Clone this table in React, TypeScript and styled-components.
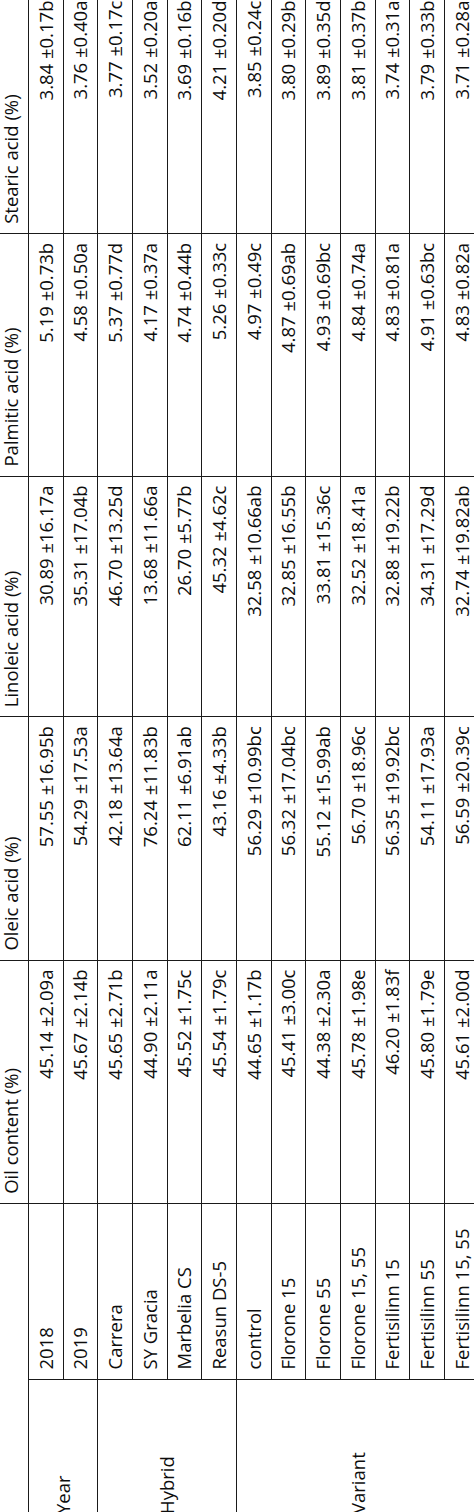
import React from "react";
import styled, { createGlobalStyle } from "styled-components";

const GlobalStyle = createGlobalStyle`
  html, body { margin: 0; padding: 0; background: #ffffff; }
  #root { width: 474px; height: 1512px; }
`;

const Page = styled.div`
  width: 474px;
  height: 1512px;
  overflow: hidden;
  background: #ffffff;
`;

const Sheet = styled.div`
  width: 1533px;
  transform-origin: 0 0;
  transform: translate(-6px, 1524px) rotate(-90deg);
`;

const Table = styled.table`
  width: 1533px;
  table-layout: fixed;
  border-collapse: collapse;
  font-family: "Open Sans", "Noto Sans", sans-serif;
  font-size: 18.5px;
  color: #0d0d0d;
  line-height: 1;
`;

const Row = styled.tr`
  height: 34.67px;
`;

const HeadCell = styled.th`
  border: 1px solid #1a1a1a;
  border-top: none;
  font-weight: 400;
  text-align: left;
  padding: 0 0 0 9px;
  vertical-align: middle;
  white-space: nowrap;
  overflow: hidden;
`;

const GroupCell = styled.td`
  border: 1px solid #1a1a1a;
  border-left: none;
  padding: 0 0 0 10px;
  vertical-align: middle;
  white-space: nowrap;
`;

const LabelCell = styled.td`
  border: 1px solid #1a1a1a;
  padding: 0 0 0 10px;
  vertical-align: middle;
  white-space: nowrap;
`;

const ValueCell = styled.td`
  border: 1px solid #1a1a1a;
  padding: 0 9px 0 0;
  text-align: right;
  vertical-align: middle;
  white-space: nowrap;
`;

type DataRow = {
  group?: { name: string; span: number };
  label: string;
  values: string[];
};

const headers = [
  "Oil content (%)",
  "Oleic acid (%)",
  "Linoleic acid (%)",
  "Palmitic acid (%)",
  "Stearic acid (%)",
];

const rows: DataRow[] = [
  { group: { name: "Year", span: 2 }, label: "2018", values: ["45.14 ±2.09a", "57.55 ±16.95b", "30.89 ±16.17a", "5.19 ±0.73b", "3.84 ±0.17b"] },
  { label: "2019", values: ["45.67 ±2.14b", "54.29 ±17.53a", "35.31 ±17.04b", "4.58 ±0.50a", "3.76 ±0.40a"] },
  { group: { name: "Hybrid", span: 4 }, label: "Carrera", values: ["45.65 ±2.71b", "42.18 ±13.64a", "46.70 ±13.25d", "5.37 ±0.77d", "3.77 ±0.17c"] },
  { label: "SY Gracia", values: ["44.90 ±2.11a", "76.24 ±11.83b", "13.68 ±11.66a", "4.17 ±0.37a", "3.52 ±0.20a"] },
  { label: "Marbelia CS", values: ["45.52 ±1.75c", "62.11 ±6.91ab", "26.70 ±5.77b", "4.74 ±0.44b", "3.69 ±0.16b"] },
  { label: "Reasun DS-5", values: ["45.54 ±1.79c", "43.16 ±4.33b", "45.32 ±4.62c", "5.26 ±0.33c", "4.21 ±0.20d"] },
  { group: { name: "Variant", span: 7 }, label: "control", values: ["44.65 ±1.17b", "56.29 ±10.99bc", "32.58 ±10.66ab", "4.97 ±0.49c", "3.85 ±0.24c"] },
  { label: "Florone 15", values: ["45.41 ±3.00c", "56.32 ±17.04bc", "32.85 ±16.55b", "4.87 ±0.69ab", "3.80 ±0.29b"] },
  { label: "Florone 55", values: ["44.38 ±2.30a", "55.12 ±15.99ab", "33.81 ±15.36c", "4.93 ±0.69bc", "3.89 ±0.35d"] },
  { label: "Florone 15, 55", values: ["45.78 ±1.98e", "56.70 ±18.96c", "32.52 ±18.41a", "4.84 ±0.74a", "3.81 ±0.37b"] },
  { label: "Fertisilinn 15", values: ["46.20 ±1.83f", "56.35 ±19.92bc", "32.88 ±19.22b", "4.83 ±0.81a", "3.74 ±0.31a"] },
  { label: "Fertisilinn 55", values: ["45.80 ±1.79e", "54.11 ±17.93a", "34.31 ±17.29d", "4.91 ±0.63bc", "3.79 ±0.33b"] },
  { label: "Fertisilinn 15, 55", values: ["45.61 ±2.00d", "56.59 ±20.39c", "32.74 ±19.82ab", "4.83 ±0.82a", "3.71 ±0.28a"] },
];

const colWidths = [144, 176.7, 243.3, 243.3, 240.7, 242.7, 242.3];

export default function App() {
  return (
    <>
      <GlobalStyle />
      <Page>
        <Sheet>
          <Table>
            <colgroup>
              {colWidths.map((w, i) => (
                <col key={i} style={{ width: `${w}px` }} />
              ))}
            </colgroup>
            <thead>
              <Row>
                <HeadCell colSpan={2} style={{ borderLeft: "none" }} />
                {headers.map((h) => (
                  <HeadCell key={h}>{h}</HeadCell>
                ))}
              </Row>
            </thead>
            <tbody>
              {rows.map((r) => (
                <Row key={r.label}>
                  {r.group && <GroupCell rowSpan={r.group.span}>{r.group.name}</GroupCell>}
                  <LabelCell>{r.label}</LabelCell>
                  {r.values.map((v, i) => (
                    <ValueCell key={i}>{v}</ValueCell>
                  ))}
                </Row>
              ))}
            </tbody>
          </Table>
        </Sheet>
      </Page>
    </>
  );
}
